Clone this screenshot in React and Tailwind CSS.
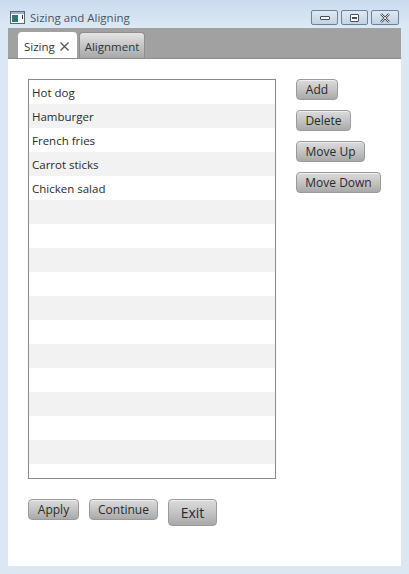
import React from 'react'

const foods = ['Hot dog', 'Hamburger', 'French fries', 'Carrot sticks', 'Chicken salad']
const rows = Array.from({ length: 16 }, (_, i) => foods[i] || '')

const Btn = ({ label, className }) => (
  <button className={`flex items-center justify-center rounded-[4px] border border-[#9a9a9a] bg-gradient-to-b from-[#dcdcdc] via-[#c4c4c4] to-[#a9a9a9] text-[#2a2a2a] shadow-[inset_0_1px_0_#eeeeee] ${className}`}>
    {label}
  </button>
)

const WinBtn = ({ className, children }) => (
  <div className={`flex h-[15px] items-center justify-center rounded-[2px] border border-[#6f8197] bg-gradient-to-b from-[#dfe9f3] to-[#c3d2e2] ${className}`}>
    {children}
  </div>
)

const App = () => {
  return (
    <div className="flex h-[574px] w-[409px] flex-col overflow-hidden bg-[#dbe7f3] font-['Open_Sans','Noto_Sans',sans-serif]">
      {/* Title bar */}
      <div className="flex h-[28px] shrink-0 items-start bg-gradient-to-b from-[#c9dcee] to-[#dde9f4] pl-[10px] pr-[10px] pt-[10px]">
        <svg width="15" height="13" viewBox="0 0 15 13" className="mr-[5px] mt-[1px]">
          <rect x="0.5" y="0.5" width="14" height="12" fill="#f4f6f8" stroke="#5a6670" />
          <rect x="1" y="1" width="13" height="2" fill="#9fb4c8" />
          <rect x="2" y="4" width="6" height="7" fill="#2f7a70" />
          <rect x="12" y="4" width="1" height="4" fill="#333333" />
        </svg>
        <span className="text-[11.5px] leading-[16px] text-[#4b5560]">Sizing and Aligning</span>
        <div className="ml-auto flex gap-[3px]">
          <WinBtn className="w-[27px]">
            <div className="h-[4px] w-[10px] rounded-[1px] border border-[#44505c] bg-white" />
          </WinBtn>
          <WinBtn className="w-[27px]">
            <div className="flex h-[8px] w-[9px] items-center justify-center rounded-[1px] border border-[#44505c] bg-white">
              <div className="h-[2px] w-[5px] bg-[#44505c]" />
            </div>
          </WinBtn>
          <WinBtn className="w-[28px]">
            <svg width="12" height="10" viewBox="0 0 12 10">
              <path d="M2 1 L10 9 M10 1 L2 9" stroke="#44505c" strokeWidth="2.4" />
              <path d="M2 1 L10 9 M10 1 L2 9" stroke="#ffffff" strokeWidth="0.8" />
            </svg>
          </WinBtn>
        </div>
      </div>

      {/* Window body */}
      <div className="mx-[8px] mb-[8px] flex flex-1 flex-col bg-white">
        {/* Tabs */}
        <div className="flex h-[31px] shrink-0 items-end gap-[2px] border-b border-[#8c8c8c] bg-[#a1a1a1] pl-[10px]">
          <div className="flex h-[26px] w-[59px] items-center rounded-t-[4px] bg-white pl-[6px] pt-[3px] text-[11.5px] text-[#333333]">
            Sizing
            <svg width="11" height="11" viewBox="0 0 11 11" className="ml-[4px]">
              <path d="M1.5 1.5 L9.5 9.5 M9.5 1.5 L1.5 9.5" stroke="#555555" strokeWidth="1.3" />
            </svg>
          </div>
          <div className="flex h-[26px] w-[66px] items-center justify-center rounded-t-[4px] border border-b-0 border-[#8e8e8e] bg-gradient-to-b from-[#e4e4e4] to-[#a8a8a8] pt-[3px] text-[11.5px] text-[#333333]">
            Alignment
          </div>
        </div>

        <div className="flex flex-col pl-[20px] pt-[20px]">
          <div className="flex items-start">
            {/* List */}
            <div className="h-[400px] w-[248px] overflow-hidden border border-[#8a8a8a] bg-white">
              {rows.map((item, i) => (
                <div
                  key={i}
                  className={`flex h-[24px] items-center pl-[3px] pt-[2px] text-[11.5px] text-[#2a2a2a] ${i % 2 === 1 ? 'bg-[#f2f2f2]' : 'bg-white'}`}
                >
                  {item}
                </div>
              ))}
            </div>

            {/* Side buttons */}
            <div className="ml-[20px] flex flex-col items-start gap-[10px]">
              <Btn label="Add" className="h-[21px] w-[42px] text-[12px]" />
              <Btn label="Delete" className="h-[21px] w-[55px] text-[12px]" />
              <Btn label="Move Up" className="h-[21px] w-[69px] text-[12px]" />
              <Btn label="Move Down" className="h-[21px] w-[85px] text-[12px]" />
            </div>
          </div>

          {/* Bottom buttons */}
          <div className="mt-[20px] flex items-start gap-[10px]">
            <Btn label="Apply" className="h-[21px] w-[51px] text-[12px]" />
            <Btn label="Continue" className="h-[21px] w-[69px] text-[12px]" />
            <Btn label="Exit" className="h-[27px] w-[49px] text-[14px]" />
          </div>
        </div>
      </div>
    </div>
  )
}

export default App
